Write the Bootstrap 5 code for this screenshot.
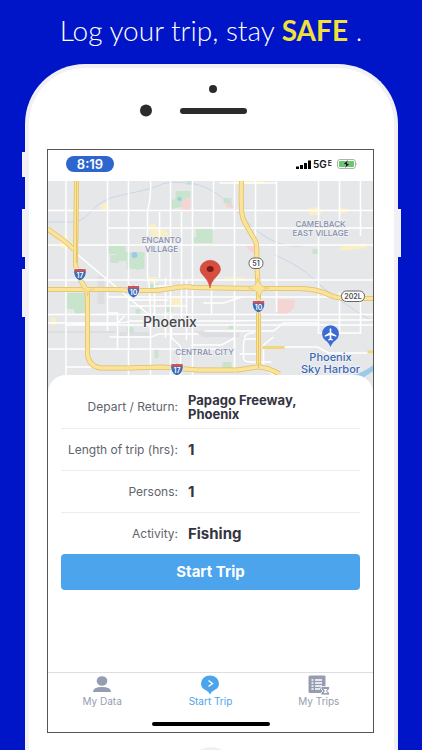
<!DOCTYPE html>
<html lang="en">
<head>
<meta charset="utf-8">
<meta name="viewport" content="width=device-width, initial-scale=1">
<title>Log your trip</title>
<link href="https://cdn.jsdelivr.net/npm/bootstrap@5.3.0/dist/css/bootstrap.min.css" rel="stylesheet">
<style>
body{background:#0014c8;font-family:Inter,"Liberation Sans",sans-serif;color:#33343f}
.headline{font:300 28px/32px Lato,"Open Sans",sans-serif;padding:14px 0 18px}
.headline strong{font-weight:700;color:#f0e03c}
.phone{margin:0 24px 0 25px;padding:0 20px 0 18px;background:#fff;border:4px solid #f0f0f5;border-bottom:0;border-radius:60px 60px 0 0}
.side-key{background:#f0f0f5;width:3px;height:48px;left:-7px}
.key-mute{top:84px;height:25px}.key-up{top:141px}.key-down{top:201px}
.key-power{top:141px;left:auto;right:-7px}
.sensors{height:81px}
.screen{border:1px solid #555}
.status{height:31px;padding:0 15px 3px 18px}
.clock{background:#2d66cf;color:#fff;width:48px;height:16px;font-size:13px;line-height:16px;font-weight:600}
.network{font-size:10px;font-weight:600;color:#111;gap:1px}
.network small{font-size:7px}
.map-view{height:210px}
.map-view text{font-family:Inter,"Liberation Sans",sans-serif}
.sheet{margin-top:-16px;padding:11px 13px 0;border-radius:18px 18px 0 0;background:#fff}
.trip-row{height:42px;gap:10px;line-height:14px}
.trip-row + .trip-row{border-top:1px solid #ededf0}
.trip-row dt{flex:0 0 117px;font-size:12px;font-weight:400;color:#62636d}
.trip-row dd{font-size:15px;font-weight:700}
.trip-row .place{font-size:13px}
.start{background:#4ba4ec;color:#fff;height:36px;font-size:15px;font-weight:700;border-radius:4px}
.start:hover{background:#3a95df;color:#fff}
.tabs{border-top:1px solid #dedee2;height:50px;padding-top:2px}
.tabs a{font-size:10px;line-height:12px;color:#969db0}
.tabs a.active{color:#4ba4ec}
.home-line{width:118px;height:4px;background:#000;margin-bottom:6px}
.foot{height:17px}
</style>
<script src="https://cdn.jsdelivr.net/npm/bootstrap@5.3.0/dist/js/bootstrap.bundle.min.js"></script>
</head>
<body class="vh-100 d-flex flex-column overflow-hidden">
<h1 class="headline text-white text-center m-0">Log your trip, stay <strong>SAFE</strong> .</h1>
<div class="phone flex-grow-1 d-flex flex-column position-relative">
  <span class="side-key key-mute position-absolute"></span>
  <span class="side-key key-up position-absolute"></span>
  <span class="side-key key-down position-absolute"></span>
  <span class="side-key key-power position-absolute"></span>
  <div class="sensors text-center">
    <svg width="142" height="60" viewBox="0 0 142 60" aria-hidden="true" fill="#2b2b2b"><circle cx="73" cy="21" r="4"/><rect x="40" y="40" width="67" height="6" rx="3"/><circle cx="6" cy="42.500" r="6"/></svg>
  </div>
  <main class="screen flex-grow-1 d-flex flex-column">
    <header class="status d-flex align-items-center justify-content-between">
      <span class="clock rounded-pill text-center">8:19</span>
      <span class="network d-flex align-items-center">
        <svg width="16" height="9" viewBox="0 0 16 9" aria-hidden="true"><path d="M0 6.500h3V9H0zM4 5h3v4H4zM8 3h3v6H8zM12 .5h3V9h-3z"/></svg>5G<small>E</small>
        <svg class="ms-1" width="21" height="10" viewBox="0 0 21 10" aria-hidden="true"><rect x=".5" y=".5" width="18" height="9" rx="2.500" fill="#fff" stroke="#a9b3a9"/><rect x="2" y="2" width="15" height="6" rx="1" fill="#63ca68"/><path d="M19.500 3.500q1.500 1.500 0 3z" fill="#a9b3a9"/><path d="M11 .8 5.800 5.500h3L8 9.200 13.200 4.500h-3z" fill="#111" stroke="#fff" stroke-width=".4"/></svg>
      </span>
    </header>
    <svg class="map-view w-100 d-block" viewBox="48 181 326 210" preserveAspectRatio="xMidYMid slice" role="img" aria-label="Map of Phoenix">
      <path fill="#e6e7e8" d="M0 181h422v210H0z"/>
      <path fill="#dddee1" d="M98 276h7v28h-7zM48 331h70v2H48zM196 331l44 2v4h-37zM120 332h30v4h-30z"/>
      <path fill="#c9e4cd" d="M66 293h24v19l-14 2-2-5h-8zM176 191h15v6l-5 2v7l-14 3v-9l4-1zM187 181h5v4h-5zM196 229h17v14h-19v-6h3zM109 246h17v6h10v11l-9 7v-9h-11v-7h-7zM130 252h15v17h-14zM111 255h8v8h-8zM129 256h14l2 11-7 3-8-4zM150 284h9v5h-9zM136 309h5v6h-5zM127 327h7v6h-7zM155 349h4v9h-4zM224 198h8v5h-8zM313 249h6v5h-6zM223 362h9v6h-9zM229 325h5v4h-5zM165 307h8v5h-8z"/>
      <path fill="#f5d5d4" d="M182 202l9-5v13h-9zM225 203h8v5h-6zM246 245h11v9l-7-3zM278 299l17 1v7l-8 8h-9z"/>
      <path fill="#f8efc7" d="M100 206l6-3 5 5-7 3zM148 225l9-1-2 4 11 2 4 5-2 5-16-3zM59 237l9-2 3 12-9 2zM172 296h10v10h-10zM52 316l5 3-1 6-5 1zM307 209l9-2 8 3-4 5h-9zM338 208l12 1-3 4-7 1zM340 247l25-4 3 5-27 3zM235 181h30v3h-30zM225 277h20v3h-20zM148 277h10v5h-10z"/>
      <g fill="none" stroke="#c8d6ea" stroke-width="1">
        <path d="M48 222h30q10-5 16-13c10-11 24-13 38-16s22-5 31-9 39-1 48 6c18 10 27 22 40 35s32 23 51 21"/>
        <path d="M275 255q25 10 40 25t59 42"/>
      </g>
      <g fill="#9cc9e8"><circle cx="180" cy="199" r="2"/><circle cx="135" cy="255" r="3"/><path d="M354 375q9-2 20-10v6l-14 9z"/></g>
      <g fill="none" stroke="#fff" stroke-width="1.500">
        <path d="M66.500 181v194M108 181v150M129 181v204M151 181q1 15-3 31v65q3 8 3 53v54M171 181v196M193 181v196M214 181v49M235 181v192M256 181v55M277 181v131M319 181v152M340 181v42M340 292v42M361 181v55M361 300v34"/>
        <path d="M160 212v66M182 212v115M155 280v45M166 278v60M187 280v60"/>
        <path d="M48 210.500h326M108 228h266M48 245h326M48 280h326M108 297h267M48 314.500h326M48 323h60q20 0 23-2h100l60-1h83M66 325h308M48 349h182M66 367h45"/>
        <path d="M220 183h57M108 313h10v36M73 324h44l8-8M110 337h42l7-3h40M172 314v24l9 8v36M204 303h20l18-6M212 278v37M192 345h30l13-7v34"/>
        <path d="M205 331h69l10-8h35M274 337l-10 8v18q0 6 11 12M260 339h-14q-2 1-2 6v13q0 4 8 4h20M245 338q0-5 10-5M276 347h42l11 6h45M318 333h43M240 354h22"/>
        <path d="M75 252l76 64M129 300h40M130 306h58M155 286h32"/>
      </g>
      <g fill="none" stroke="#e4be5b" stroke-width="5" stroke-linejoin="round">
        <path d="M77 181l-1 84q1 7 5 15l6 10q1 3 1 12v52q1 12 13 14h28l33-1 36 3h40l20-3q8-1 22 7M48 289.500h68l20 1h21l14-2q13-3 24-1l60 1h39q22-1 37 7 10 4 23 3h20M242 181q-1 25 1 36 2 6 13 24 2 6 1 20l2 30v73M48 229l17 12 9 8"/>
      </g>
      <g fill="none" stroke="#fae49b" stroke-width="3.500" stroke-linejoin="round">
        <path d="M77 181l-1 84q1 7 5 15l6 10q1 3 1 12v52q1 12 13 14h28l33-1 36 3h40l20-3q8-1 22 7M48 289.500h68l20 1h21l14-2q13-3 24-1l60 1h39q22-1 37 7 10 4 23 3h20M242 181q-1 25 1 36 2 6 13 24 2 6 1 20l2 30v73M48 229l17 12 9 8"/>
      </g>
      <path d="M77 181v82M259 305v63" stroke="#e7c363" stroke-width="1"/>
      <path d="M263 347.500h22M368 352h6" stroke="#f0d67c" stroke-width="3"/>
      <path d="M249 287q9 0 9-9 1 9 11 10-8 1-9 10-2-9-11-10M82 289q6-2 6 7 0-7 7-7" fill="#fae49b" stroke="#e7c66a" stroke-width=".7"/>
      <defs>
        <g id="shield"><path d="M-5.500-5.500Q-3-4.500 0-5.500 3-4.500 5.500-5.500 7-1 5.500 2 4 5.500 0 7-4 5.500-5.500 2-7-1-5.500-5.500z" fill="#3d6cb5" stroke="#fff" stroke-width=".8"/><path d="M-5.200-5.200Q-3-4.300 0-5.200 3-4.300 5.200-5.200L6-2.500H-6z" fill="#cf5353"/></g>
      </defs>
      <use href="#shield" x="80.500" y="274"/><use href="#shield" x="134" y="291"/><use href="#shield" x="259" y="306"/><use href="#shield" x="177.500" y="369"/>
      <g fill="#fff" font-size="7" font-weight="600" text-anchor="middle"><text x="80.500" y="278">17</text><text x="134" y="295">10</text><text x="259" y="310">10</text><text x="177.500" y="373">17</text></g>
      <g fill="#fff" stroke="#666" stroke-width="1"><rect x="249.500" y="258" width="14" height="10.500" rx="5"/><rect x="342" y="291" width="23" height="10.500" rx="5"/></g>
      <g fill="#4b4d52" font-size="7" font-weight="600" text-anchor="middle"><text x="256.500" y="266">51</text><text x="353.500" y="299">202L</text></g>
      <g fill="#858fa9" stroke="#eff0f3" stroke-width="1.500" paint-order="stroke" font-size="8" font-weight="500" text-anchor="middle">
        <text x="162" y="243">ENCANTO</text><text x="162" y="252">VILLAGE</text>
        <text x="321" y="227">CAMELBACK</text><text x="321" y="236">EAST VILLAGE</text>
        <text x="205" y="355">CENTRAL CITY</text>
      </g>
      <text x="170.500" y="327" font-size="14" font-weight="500" text-anchor="middle" fill="#44464b" stroke="#f3f3f4" stroke-width="1.500" paint-order="stroke">Phoenix</text>
      <g font-size="11" font-weight="500" text-anchor="middle" fill="#3968b6" stroke="#f3f3f4" stroke-width="1.500" paint-order="stroke"><text x="331" y="361">Phoenix</text><text x="331" y="373">Sky Harbor</text></g>
      <path d="M331 347q-2-5-5-6.500a8.500 8.500 0 1 1 10 0q-3 1.500-5 6.500z" fill="#3c6cd3"/>
      <path d="M330.200 329q.8-1.400 1.600 0v3.500l5 3v1.300l-5-1.500v3.200l1.700 1.300v.8l-2.500-.7-2.500.7v-.8l1.700-1.300v-3.200l-5 1.500v-1.300l5-3z" fill="#fff"/>
      <path d="M210.500 288q-1-6-5-10.500-5-5-5-8a10 9 0 0 1 20.500 0q0 3-5 8-4.500 4.500-5.500 10.500z" fill="#d84e3e" stroke="#be4438" stroke-width=".5"/><ellipse cx="210.700" cy="269" rx="3.500" ry="3" fill="#7d1916"/>
    </svg>
    <section class="sheet flex-grow-1 position-relative">
      <dl class="m-0">
        <div class="trip-row d-flex align-items-center"><dt class="text-end">Depart / Return:</dt><dd class="place m-0">Papago Freeway,<br>Phoenix</dd></div>
        <div class="trip-row d-flex align-items-center"><dt class="text-end">Length of trip (hrs):</dt><dd class="m-0">1</dd></div>
        <div class="trip-row d-flex align-items-center"><dt class="text-end">Persons:</dt><dd class="m-0">1</dd></div>
        <div class="trip-row d-flex align-items-center"><dt class="text-end">Activity:</dt><dd class="m-0">Fishing</dd></div>
      </dl>
      <button type="button" class="start btn border-0 w-100 p-0 d-block">Start Trip</button>
    </section>
    <nav class="tabs row g-0 text-center">
      <a href="#data" class="col text-decoration-none"><svg class="d-block mx-auto" width="20" height="20" viewBox="0 0 20 20" fill="currentColor" aria-hidden="true"><ellipse cx="10" cy="6" rx="5.300" ry="4.800"/><path d="M1 17q0-5 9-5t9 5z"/></svg>My Data</a>
      <a href="#start" class="active col text-decoration-none" aria-current="page"><svg class="d-block mx-auto" width="20" height="20" viewBox="0 0 20 20" aria-hidden="true"><path d="M10 19.500q-1-3-4.500-4.500C2 13.500 1 11 1 8.500A9 8 0 0 1 19 8.500c0 2.500-1 5-4.500 6.500Q11 16.500 10 19.500z" fill="currentColor"/><path d="m8.500 5.500 4 3-4 3" fill="none" stroke="#fff" stroke-width="1.500"/></svg>Start Trip</a>
      <a href="#trips" class="col text-decoration-none"><svg class="d-block mx-auto" width="22" height="20" viewBox="0 0 22 20" aria-hidden="true"><path d="M2 .5h14q1.500 0 1.500 1V18H2q-1.500 0-1.500-1.500V2Q.5.500 2 .5z" fill="currentColor"/><path d="M3.500 5h2M7 5h7M3.500 8h2M7 8h7M3.500 11h2M7 11h7M3.500 14h2M7 14h5" stroke="#fff" stroke-width="1.300"/><path d="M13 11.500h8.500V14l-2 2 2 2v2H13v-2l2-2-2-2z" fill="currentColor" stroke="#fff" stroke-width=".8"/><path d="M15.500 14h4L18 16l1.500 2h-4l1.500-2z" fill="#fff"/></svg>My Trips</a>
    </nav>
    <div class="home-line rounded-pill mx-auto"></div>
  </main>
  <div class="foot d-flex align-items-end justify-content-center"><svg width="36" height="4" viewBox="0 0 36 4" aria-hidden="true"><circle cx="18" cy="23" r="22" fill="#f0f0f2"/></svg></div>
</div>
</body>
</html>
